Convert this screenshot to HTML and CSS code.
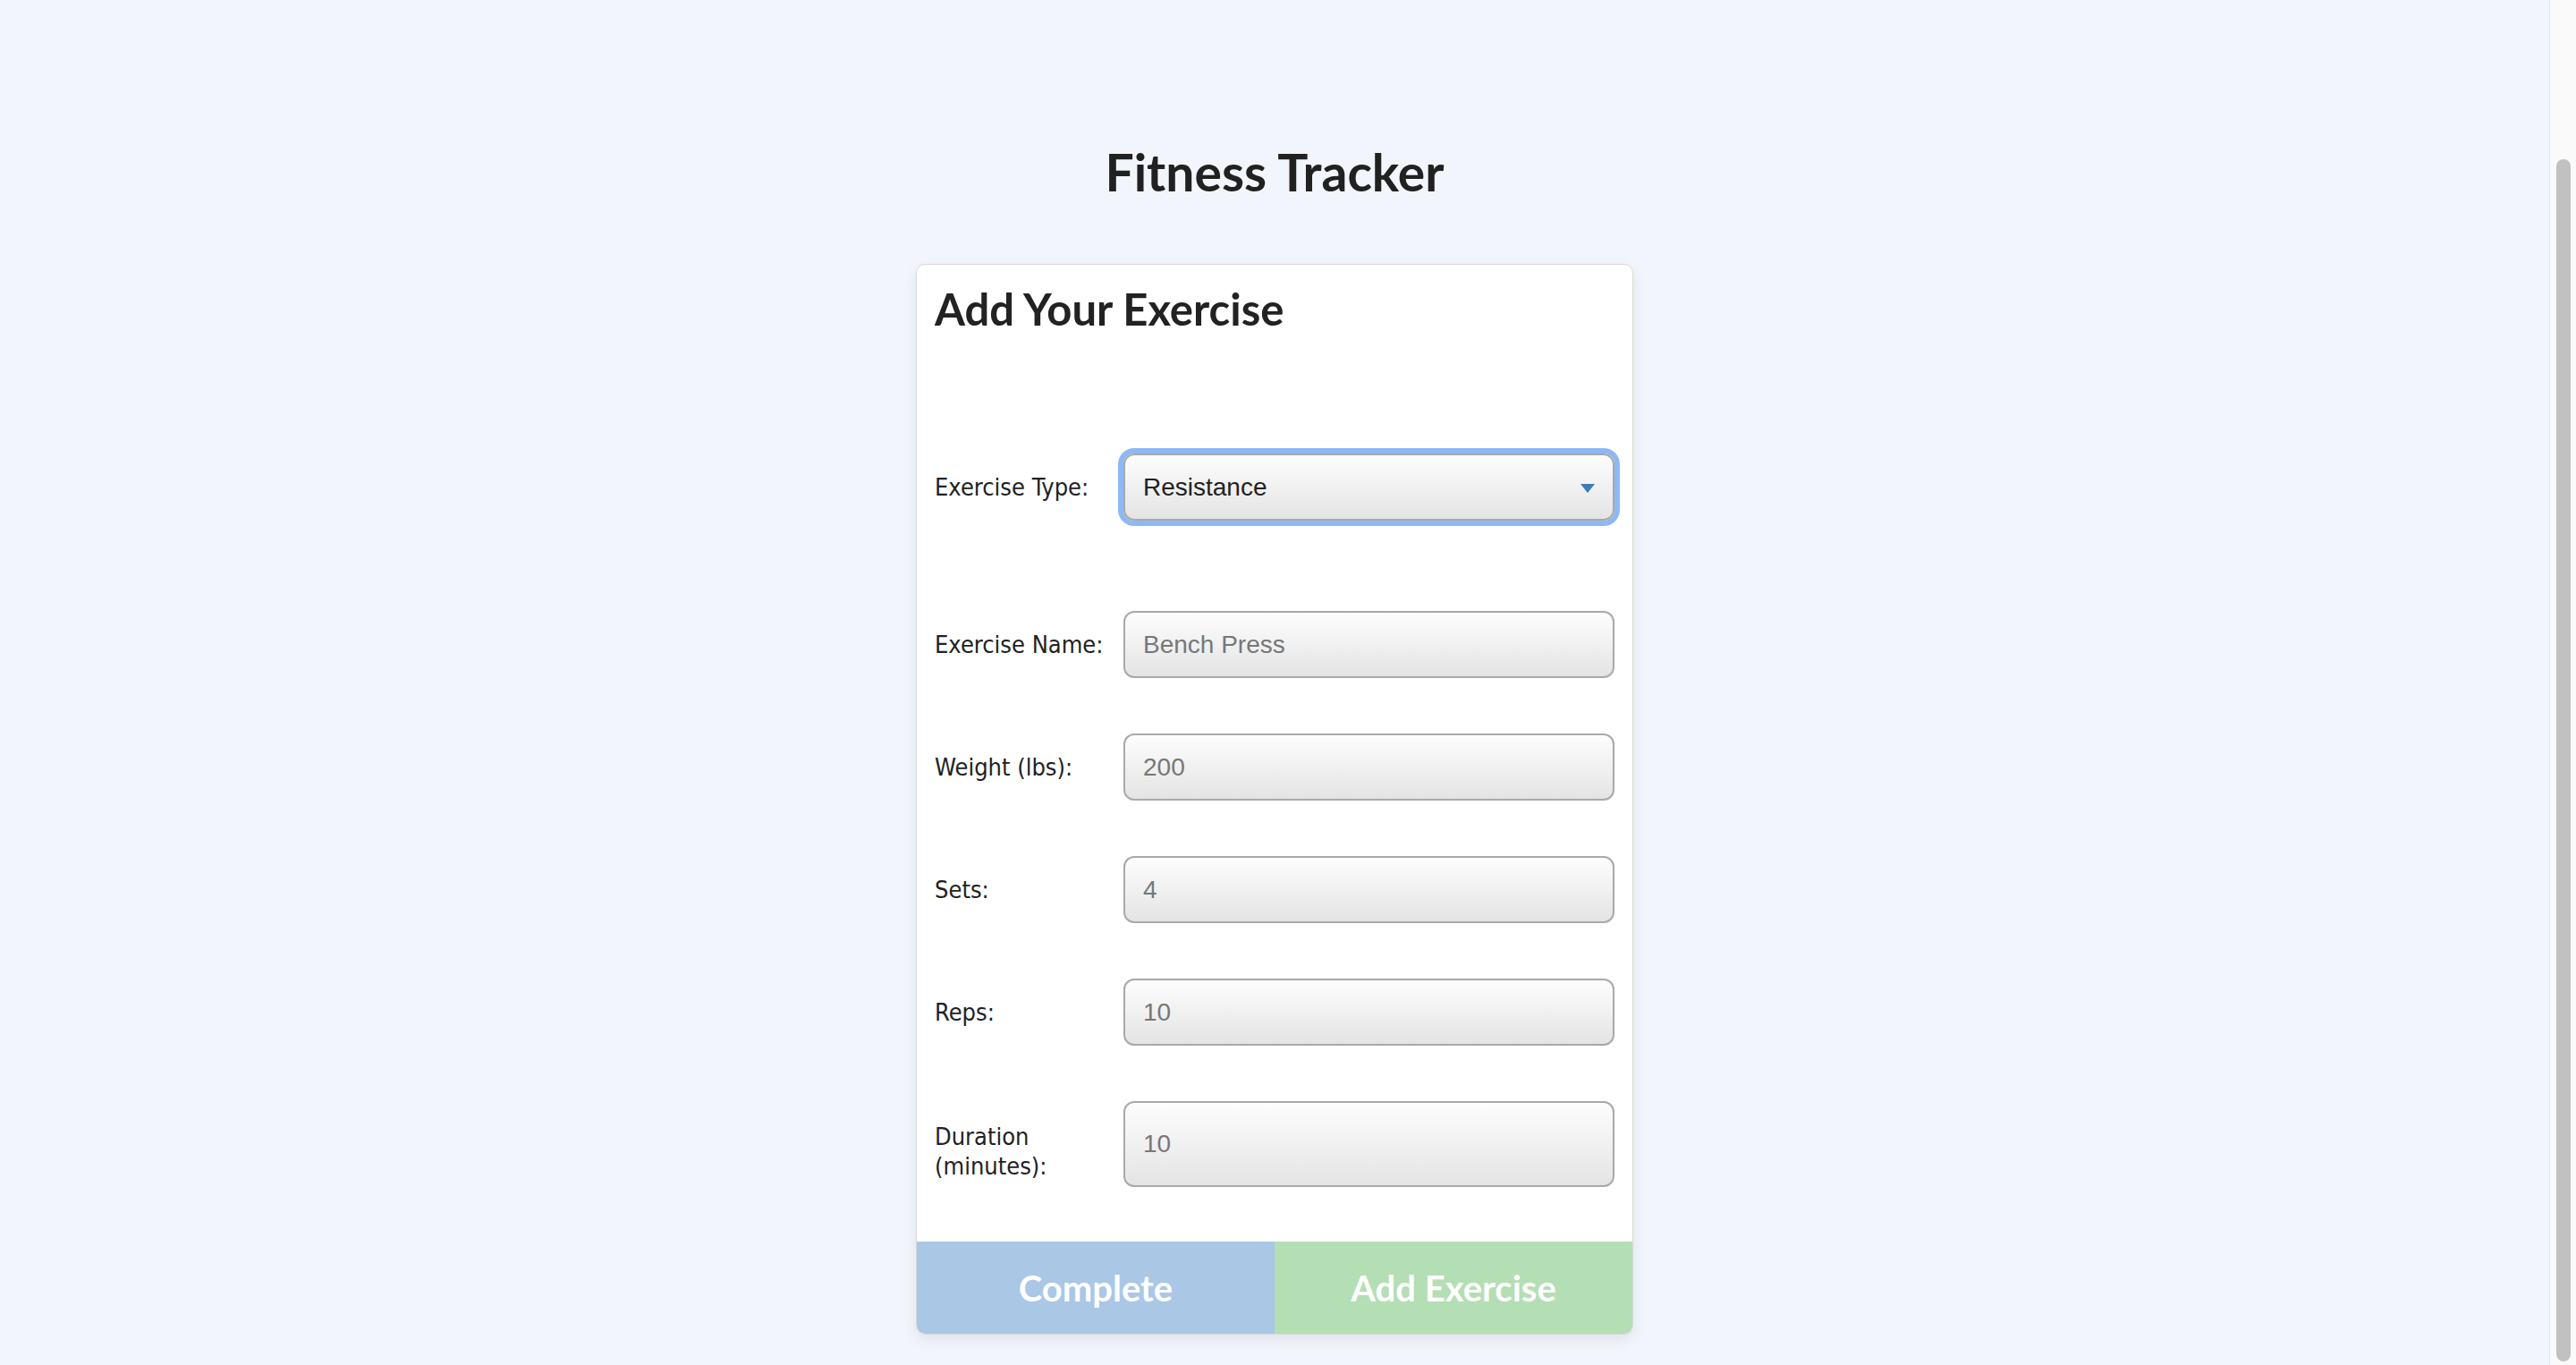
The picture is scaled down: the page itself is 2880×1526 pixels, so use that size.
FILE: index.html
```html
<!DOCTYPE html>
<html lang="en">
<head>
<meta charset="utf-8">
<title>Fitness Tracker</title>
<link rel="stylesheet" href="styles.css">
</head>
<body>
<main class="page">
  <h1 class="page-title">Fitness Tracker</h1>
  <section class="card">
    <form class="card-body">
      <h2 class="card-title">Add Your Exercise</h2>
      <div class="field field-type">
        <label class="field-label" for="type">Exercise Type:</label>
        <div class="select-wrap">
          <select id="type" class="field-select">
            <option>Resistance</option>
            <option>Cardio</option>
          </select>
          <svg class="select-arrow" width="16" height="10" viewBox="0 0 16 10" aria-hidden="true"><path d="M0 0H16L8 10Z"/></svg>
        </div>
      </div>
      <div class="field">
        <label class="field-label" for="name">Exercise Name:</label>
        <input id="name" class="field-input" type="text" placeholder="Bench Press">
      </div>
      <div class="field">
        <label class="field-label" for="weight">Weight (lbs):</label>
        <input id="weight" class="field-input" type="text" placeholder="200">
      </div>
      <div class="field">
        <label class="field-label" for="sets">Sets:</label>
        <input id="sets" class="field-input" type="text" placeholder="4">
      </div>
      <div class="field">
        <label class="field-label" for="reps">Reps:</label>
        <input id="reps" class="field-input" type="text" placeholder="10">
      </div>
      <div class="field">
        <label class="field-label field-label-tall" for="duration">Duration<br>(minutes):</label>
        <input id="duration" class="field-input field-input-tall" type="text" placeholder="10">
      </div>
    </form>
    <div class="card-actions">
      <button class="btn btn-complete" type="button">Complete</button>
      <button class="btn btn-add" type="button">Add Exercise</button>
    </div>
  </section>
</main>
<div class="scrollbar" aria-hidden="true"><div class="scrollbar-thumb"></div></div>
<script src="script.js"></script>
</body>
</html>
```

FILE: styles.css
```css
html {
  background: #f2f6fc;
}

body {
  margin: 0;
  background: #f2f6fc;
  color: #222;
  font-family: "Lato", sans-serif;
}

::-webkit-scrollbar {
  width: 0;
  height: 0;
}

.scrollbar {
  position: fixed;
  top: 0;
  right: 0;
  bottom: 0;
  width: 29px;
  background: #fafafa;
  border-left: 1px solid #e6e6e6;
}

.scrollbar-thumb {
  position: absolute;
  top: 178px;
  bottom: 4px;
  left: 7px;
  width: 16px;
  border-radius: 8px;
  background: #c1c1c1;
}

.page {
  display: flex;
  flex-direction: column;
  align-items: center;
  padding: 365px 30px 34px 0;
}

.page-title {
  margin: 0 0 67px;
  font: 700 57px/72px "Lato", sans-serif;
  color: #212121;
}

.card {
  width: 800px;
  background: #fff;
  border: 1px solid #d9d9d9;
  border-radius: 10px;
  box-shadow: 0 6px 16px rgba(0, 0, 0, 0.08);
  overflow: hidden;
}

.card-body {
  padding: 20px 20px 61px;
  margin: 0;
}

.card-title {
  margin: 0 0 133px;
  font: 700 49px/58px "Lato", sans-serif;
  color: #222;
}

.field {
  display: flex;
  align-items: center;
  margin-bottom: 62px;
}

.field-type {
  margin-bottom: 101px;
}

.field:last-child {
  margin-bottom: 0;
}

.field-label {
  flex: 0 0 211px;
  font: 27px/33px "DejaVu Sans Condensed", "DejaVu Sans", sans-serif;
  font-stretch: semi-condensed;
  color: #222;
}

.field-label-tall {
  padding-top: 16px;
}

.field-input,
.field-select {
  flex: 1;
  min-width: 0;
  height: 75px;
  box-sizing: border-box;
  margin: 0;
  border: 2px solid #a9a9a9;
  border-radius: 12px;
  background: linear-gradient(#fdfdfd, #e4e4e4);
  padding: 0 20px;
  font: 28px "Liberation Sans", Arial, sans-serif;
  color: #222;
  outline: none;
}

.field-input::placeholder {
  color: #777;
}

.field-input-tall {
  height: 96px;
}

.select-wrap {
  position: relative;
  flex: 1;
  display: flex;
}

.field-select {
  appearance: none;
  -webkit-appearance: none;
  width: 100%;
  box-shadow: 0 0 0 6px #8db8f6;
}

.select-arrow {
  position: absolute;
  right: 22px;
  top: 34px;
  fill: #3a7bb8;
  pointer-events: none;
}

.card-actions {
  display: flex;
}

.btn {
  flex: 1;
  height: 103px;
  border: 0;
  margin: 0;
  padding: 0;
  font: 700 40px "Lato", sans-serif;
  color: #fff;
  cursor: pointer;
}

.btn-complete {
  background: #aac7e6;
}

.btn-add {
  background: #b4deb3;
}
```

FILE: script.js
```js
function scrollToBottom() {
  window.scrollTo(0, document.documentElement.scrollHeight);
}
scrollToBottom();
window.addEventListener("load", scrollToBottom);
```
